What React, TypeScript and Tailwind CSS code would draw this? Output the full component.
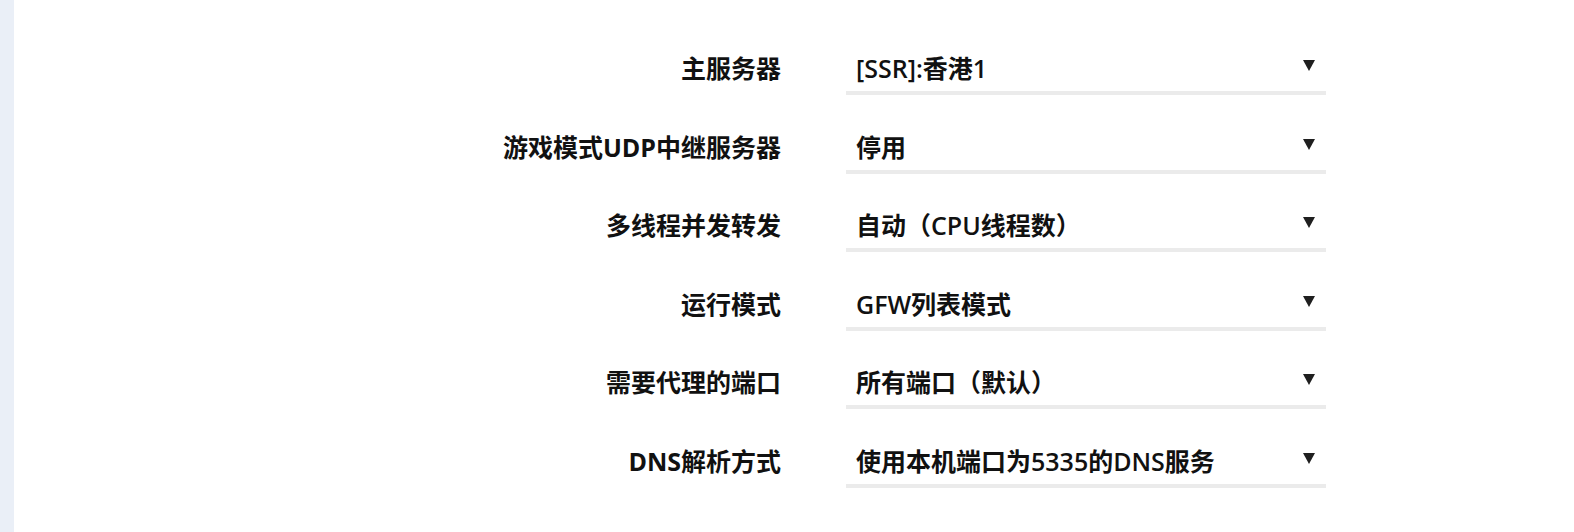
import React from 'react';

const rows: { label: string; value: string }[] = [
  { label: '主服务器', value: '[SSR]:香港1' },
  { label: '游戏模式UDP中继服务器', value: '停用' },
  { label: '多线程并发转发', value: '自动（CPU线程数）' },
  { label: '运行模式', value: 'GFW列表模式' },
  { label: '需要代理的端口', value: '所有端口（默认）' },
  { label: 'DNS解析方式', value: '使用本机端口为5335的DNS服务' },
];

const Arrow: React.FC = () => (
  <svg width="12" height="11" viewBox="0 0 12 11" className="mt-[7px] shrink-0 self-start">
    <polygon points="0,0 12,0 6,11" fill="#1f1f1f" />
  </svg>
);

const App: React.FC = () => {
  return (
    <div
      className="flex h-[532px] w-full bg-white text-[#111]"
      style={{ fontFamily: '"Open Sans", "Noto Sans CJK SC", sans-serif' }}
    >
      {/* left rail */}
      <div className="w-[14px] shrink-0 bg-[#eaeff7]"></div>

      <div className="flex flex-1 flex-col gap-[32.6px] pt-[49px]">
        {rows.map((row) => (
          <div key={row.label} className="flex items-start">
            <label className="w-[767px] pt-[4px] text-right text-[25px] font-bold leading-[30px]">
              {row.label}
            </label>
            <div className="ml-[65px] flex h-[46px] w-[480px] items-start justify-between border-b-4 border-[#ebebeb] pl-[10px] pr-[11px] pt-[4px]">
              <span className="text-[25px] font-semibold leading-[30px]">{row.value}</span>
              <Arrow />
            </div>
          </div>
        ))}
      </div>
    </div>
  );
};

export default App;
